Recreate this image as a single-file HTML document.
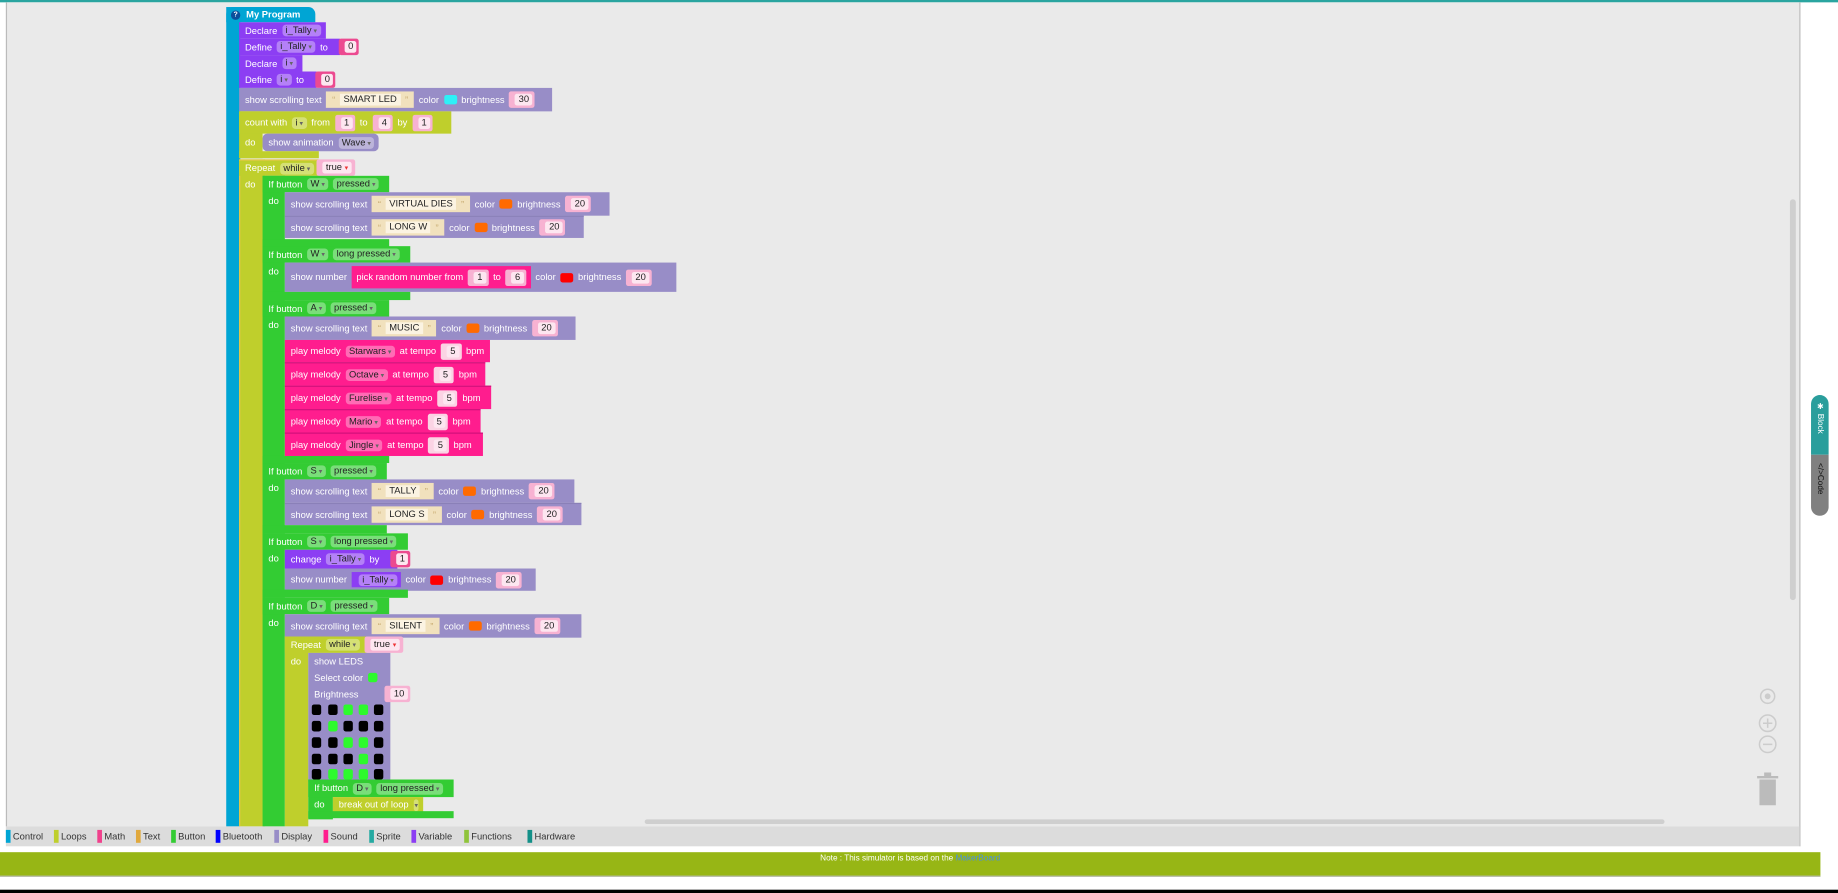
<!DOCTYPE html>
<html><head><meta charset="utf-8"><style>
html,body{margin:0;padding:0;width:1838px;height:893px;overflow:hidden;background:#fff}
#w{position:absolute;left:0;top:0;width:1568px;height:762px;transform:scale(1.17219);transform-origin:0 0;font-family:"Liberation Sans",sans-serif}
.b{position:absolute;color:#fff;font-size:8px;display:flex;align-items:center;gap:4px;padding-left:5px;box-sizing:border-box;white-space:nowrap}
.s{position:absolute}
.dd{background:rgba(255,255,255,.35);color:#222;border-radius:3px;padding:0 3px;height:10px;line-height:10px;display:inline-block}
.dd:after{content:" \25BE";font-size:6px;color:#666}
.n{background:#f7b2d2;padding:2px 2px 2px 5px;border-radius:2px;display:inline-flex}
.n i{font-style:normal;background:#fde6f0;color:#222;padding:0 3px;height:10px;line-height:10px;border-radius:2px}
.nh{background:#ec4a90}
.st{background:#f1e1bd;padding:2px 5px;display:inline-flex;gap:4px;color:#c9ad74;align-items:center}
.st i{font-style:normal;background:#fbf3e2;color:#222;padding:0 3px;height:10px;line-height:10px}
.c{display:inline-block;width:11px;height:8px;border-radius:2px}
.V{background:#8c3ef3}.D{background:#988dc7}.L{background:#bfcf2c}.G{background:#33cc33}.P{background:#ff1d8e}.C{background:#00a5d4}
.led{position:absolute;width:8px;height:9px;border-radius:2px;background:#000}
.led.g{background:#2dfa2d}
.tb{position:absolute;top:708px;font-size:8px;color:#333;display:flex;align-items:center;gap:2px}
.tb b{display:inline-block;width:4px;height:11px}
.vt{position:absolute;left:3px;writing-mode:vertical-rl;font-size:7px;line-height:9px}
</style></head><body><div id="w">
<div class="s" style="left:0;top:0;width:1568px;height:2px;background:#2aa5a0"></div>
<div class="s" style="left:5px;top:2px;width:1530px;height:703px;background:#eaeaea;border-left:1px solid #bbb"></div>
<div class="s" style="left:1527px;top:170px;width:5px;height:342px;background:#cfcfcf;border-radius:3px"></div>
<div class="s" style="left:550px;top:699px;width:870px;height:4px;background:#cfcfcf;border-radius:3px"></div>

<div class="s C" style="left:193px;top:6px;width:12px;height:699px"></div>
<div class="b C" style="left:193px;top:6px;width:76px;height:13px;border-radius:6px 6px 0 0;font-weight:bold;gap:5px;padding-left:4px"><span style="display:inline-block;width:8px;height:8px;border-radius:50%;background:#0b4f9c;font-size:6px;text-align:center;line-height:8px">?</span>My Program</div>
<div class="b V" style="left:204px;top:19px;width:74px;height:14px">Declare <span class="dd">i_Tally</span></div>
<div class="b V" style="left:204px;top:33px;width:86px;height:14px">Define <span class="dd">i_Tally</span> to</div>
<div class="b" style="left:289px;top:33px;height:14px;padding:0"><span class="n nh"><i>0</i></span></div>
<div class="b V" style="left:204px;top:47px;width:54px;height:14px">Declare <span class="dd">i</span></div>
<div class="b V" style="left:204px;top:61px;width:66px;height:14px">Define <span class="dd">i</span> to</div>
<div class="b" style="left:269px;top:61px;height:14px;padding:0"><span class="n nh"><i>0</i></span></div>
<div class="b D" style="left:204px;top:75px;width:267px;height:20px">show scrolling text <span class="st">“ <i>SMART LED</i> ”</span> color <span class="c" style="background:#2ef0f7"></span> brightness <span class="n"><i>30</i></span></div>
<div class="s L" style="left:204px;top:95px;width:20px;height:40px"></div>
<div class="b L" style="left:204px;top:95px;width:181px;height:19px">count with <span class="dd">i</span> from <span class="n"><i>1</i></span> to <span class="n"><i>4</i></span> by <span class="n"><i>1</i></span></div>
<div class="b" style="left:204px;top:114px;height:14px">do</div>
<div class="b D" style="left:224px;top:114px;width:99px;height:15px;border-radius:4px">show animation <span class="dd">Wave</span></div>
<div class="s L" style="left:204px;top:129px;width:68px;height:6px"></div>

<div class="s L" style="left:204px;top:136px;width:20px;height:569px;border-right:1px solid #e8c64a;border-left:1px solid #e8c64a"></div>
<div class="b L" style="left:204px;top:136px;width:68px;height:14px;border-top:1px solid #e8c64a">Repeat <span class="dd">while</span></div>
<div class="b" style="left:270px;top:136px;height:14px;padding:0"><span class="n" style="padding:2px 3px 2px 5px"><i>true <span style="color:#e33;font-size:6px">▾</span></i></span></div>
<div class="b" style="left:204px;top:150px;height:14px">do</div>

<div class="s G" style="left:224px;top:150px;width:19px;height:62px"></div>
<div class="b G" style="left:224px;top:150px;width:108px;height:14px">If button <span class="dd">W</span> <span class="dd">pressed</span></div>
<div class="b" style="left:224px;top:164px;height:14px">do</div>
<div class="b D" style="left:243px;top:164px;width:277px;height:20px">show scrolling text <span class="st">“ <i>VIRTUAL DIES</i> ”</span> color <span class="c" style="background:#ff6a00"></span> brightness <span class="n"><i>20</i></span></div>
<div class="b D" style="left:243px;top:184px;width:255px;height:19px;border-top:1px solid #8a80b8">show scrolling text <span class="st">“ <i>LONG W</i> ”</span> color <span class="c" style="background:#ff6a00"></span> brightness <span class="n"><i>20</i></span></div>
<div class="s G" style="left:224px;top:204px;width:108px;height:7px"></div>

<div class="s G" style="left:224px;top:210px;width:19px;height:46px"></div>
<div class="b G" style="left:224px;top:210px;width:126px;height:14px">If button <span class="dd">W</span> <span class="dd">long pressed</span></div>
<div class="b" style="left:224px;top:224px;height:14px">do</div>
<div class="b D" style="left:243px;top:224px;width:334px;height:25px">show number <span class="b P" style="position:static;height:19px;padding:0 4px">pick random number from <span class="n"><i>1</i></span> to <span class="n"><i>6</i></span></span> color <span class="c" style="background:#f00"></span> brightness <span class="n"><i>20</i></span></div>
<div class="s G" style="left:224px;top:249px;width:126px;height:7px"></div>

<div class="s G" style="left:224px;top:256px;width:19px;height:139px"></div>
<div class="b G" style="left:224px;top:256px;width:108px;height:14px">If button <span class="dd">A</span> <span class="dd">pressed</span></div>
<div class="b" style="left:224px;top:270px;height:14px">do</div>
<div class="b D" style="left:243px;top:270px;width:248px;height:20px">show scrolling text <span class="st">“ <i>MUSIC</i> ”</span> color <span class="c" style="background:#ff6a00"></span> brightness <span class="n"><i>20</i></span></div>
<div class="b P" style="left:243px;top:290px;width:175px;height:19px">play melody <span class="dd">Starwars</span> at tempo <span class="n" style="background:#fbd3e4"><i>5</i></span> bpm</div>
<div class="b P" style="left:243px;top:309px;width:171px;height:20px;border-top:1px solid #d0107a">play melody <span class="dd">Octave</span> at tempo <span class="n" style="background:#fbd3e4"><i>5</i></span> bpm</div>
<div class="b P" style="left:243px;top:329px;width:176px;height:20px;border-top:1px solid #d0107a">play melody <span class="dd">Furelise</span> at tempo <span class="n" style="background:#fbd3e4"><i>5</i></span> bpm</div>
<div class="b P" style="left:243px;top:349px;width:167px;height:20px;border-top:1px solid #d0107a">play melody <span class="dd">Mario</span> at tempo <span class="n" style="background:#fbd3e4"><i>5</i></span> bpm</div>
<div class="b P" style="left:243px;top:369px;width:169px;height:20px;border-top:1px solid #d0107a">play melody <span class="dd">Jingle</span> at tempo <span class="n" style="background:#fbd3e4"><i>5</i></span> bpm</div>
<div class="s G" style="left:224px;top:389px;width:108px;height:6px"></div>

<div class="s G" style="left:224px;top:395px;width:19px;height:60px"></div>
<div class="b G" style="left:224px;top:395px;width:106px;height:14px">If button <span class="dd">S</span> <span class="dd">pressed</span></div>
<div class="b" style="left:224px;top:409px;height:14px">do</div>
<div class="b D" style="left:243px;top:409px;width:247px;height:20px">show scrolling text <span class="st">“ <i>TALLY</i> ”</span> color <span class="c" style="background:#ff6a00"></span> brightness <span class="n"><i>20</i></span></div>
<div class="b D" style="left:243px;top:429px;width:253px;height:19px;border-top:1px solid #8a80b8">show scrolling text <span class="st">“ <i>LONG S</i> ”</span> color <span class="c" style="background:#ff6a00"></span> brightness <span class="n"><i>20</i></span></div>
<div class="s G" style="left:224px;top:448px;width:106px;height:7px"></div>

<div class="s G" style="left:224px;top:455px;width:19px;height:55px"></div>
<div class="b G" style="left:224px;top:455px;width:124px;height:14px">If button <span class="dd">S</span> <span class="dd">long pressed</span></div>
<div class="b" style="left:224px;top:469px;height:14px">do</div>
<div class="b V" style="left:243px;top:469px;width:96px;height:16px">change <span class="dd">i_Tally</span> by</div>
<div class="b" style="left:333px;top:469px;height:16px;padding:0"><span class="n nh"><i>1</i></span></div>
<div class="b D" style="left:243px;top:485px;width:214px;height:19px">show number <span class="b V" style="position:static;height:13px;padding:0 3px 0 6px"><span class="dd">i_Tally</span></span> color <span class="c" style="background:#f00"></span> brightness <span class="n"><i>20</i></span></div>
<div class="s G" style="left:224px;top:503px;width:124px;height:7px"></div>

<div class="s G" style="left:224px;top:510px;width:19px;height:195px"></div>
<div class="b G" style="left:224px;top:510px;width:108px;height:14px">If button <span class="dd">D</span> <span class="dd">pressed</span></div>
<div class="b" style="left:224px;top:524px;height:14px">do</div>
<div class="b D" style="left:243px;top:524px;width:253px;height:20px">show scrolling text <span class="st">“ <i>SILENT</i> ”</span> color <span class="c" style="background:#ff6a00"></span> brightness <span class="n"><i>20</i></span></div>
<div class="s L" style="left:243px;top:543px;width:20px;height:162px"></div>
<div class="b L" style="left:243px;top:543px;width:70px;height:14px">Repeat <span class="dd">while</span></div>
<div class="b" style="left:311px;top:543px;height:14px;padding:0"><span class="n" style="padding:2px 3px 2px 5px"><i>true <span style="color:#e33;font-size:6px">▾</span></i></span></div>
<div class="b" style="left:243px;top:557px;height:14px">do</div>
<div class="s D" style="left:263px;top:557px;width:70px;height:110px"></div>
<div class="b" style="left:263px;top:557px;height:14px">show LEDS</div>
<div class="b" style="left:263px;top:571px;height:14px">Select color <span class="c" style="background:#2dfa2d;width:8px;height:8px"></span></div>
<div class="b" style="left:263px;top:585px;height:14px">Brightness</div>
<div class="b" style="left:328px;top:584px;height:15px;padding:0"><span class="n"><i>10</i></span></div>
<div class="led" style="left:266px;top:601px"></div><div class="led" style="left:280px;top:601px"></div><div class="led g" style="left:293px;top:601px"></div><div class="led g" style="left:306px;top:601px"></div><div class="led" style="left:319px;top:601px"></div>
<div class="led" style="left:266px;top:615px"></div><div class="led g" style="left:280px;top:615px"></div><div class="led" style="left:293px;top:615px"></div><div class="led" style="left:306px;top:615px"></div><div class="led" style="left:319px;top:615px"></div>
<div class="led" style="left:266px;top:629px"></div><div class="led" style="left:280px;top:629px"></div><div class="led g" style="left:293px;top:629px"></div><div class="led g" style="left:306px;top:629px"></div><div class="led" style="left:319px;top:629px"></div>
<div class="led" style="left:266px;top:643px"></div><div class="led" style="left:280px;top:643px"></div><div class="led" style="left:293px;top:643px"></div><div class="led g" style="left:306px;top:643px"></div><div class="led" style="left:319px;top:643px"></div>
<div class="led" style="left:266px;top:656px"></div><div class="led g" style="left:280px;top:656px"></div><div class="led g" style="left:293px;top:656px"></div><div class="led g" style="left:306px;top:656px"></div><div class="led" style="left:319px;top:656px"></div>
<div class="s G" style="left:263px;top:665px;width:21px;height:34px"></div>
<div class="b G" style="left:263px;top:665px;width:124px;height:15px">If button <span class="dd">D</span> <span class="dd">long pressed</span></div>
<div class="b" style="left:263px;top:680px;height:13px">do</div>
<div class="b L" style="left:284px;top:680px;width:77px;height:13px">break out of loop <span class="dd" style="width:2px;padding:0 1px"></span></div>
<div class="s G" style="left:263px;top:692px;width:124px;height:6px"></div>

<svg class="s" style="left:1498px;top:584px" width="22" height="110" viewBox="0 0 22 110">
<g fill="none" stroke="#ccc" stroke-width="1.3"><circle cx="10" cy="10" r="6"/><circle cx="10" cy="33" r="7"/><circle cx="10" cy="51" r="7"/><path d="M10 29v8M6 33h8M6 51h8"/></g>
<circle cx="10" cy="10" r="2.5" fill="#ccc"/>
<path d="M1 78h18v2H1zM7 75h6v3H7zM3 81h14v22H3z" fill="#bbb"/>
</svg>
<div class="s" style="left:1535px;top:2px;width:1px;height:720px;background:#bbb"></div>

<div class="s" style="left:1545px;top:337px;width:15px;height:51px;background:#2a9e9c;border-radius:8px 8px 0 0;color:#fff"><span class="vt" style="top:6px">✱ Block</span></div>
<div class="s" style="left:1545px;top:388px;width:15px;height:52px;background:#808080;border-radius:0 0 8px 8px;color:#111"><span class="vt" style="top:7px">&lt;/&gt;Code</span></div>

<div class="s" style="left:5px;top:705px;width:1530px;height:17px;background:#dcdcdc"></div>
<div class="tb" style="left:5px"><b style="background:#00a5d4"></b>Control</div>
<div class="tb" style="left:46px"><b style="background:#bfcf2c"></b>Loops</div>
<div class="tb" style="left:83px"><b style="background:#f0418c"></b>Math</div>
<div class="tb" style="left:116px"><b style="background:#e0a83c"></b>Text</div>
<div class="tb" style="left:146px"><b style="background:#33cc33"></b>Button</div>
<div class="tb" style="left:184px"><b style="background:#0000ff"></b>Bluetooth</div>
<div class="tb" style="left:234px"><b style="background:#988dc7"></b>Display</div>
<div class="tb" style="left:276px"><b style="background:#ff1d8e"></b>Sound</div>
<div class="tb" style="left:315px"><b style="background:#26aaa2"></b>Sprite</div>
<div class="tb" style="left:351px"><b style="background:#8c3ef3"></b>Variable</div>
<div class="tb" style="left:396px"><b style="background:#8fc43a"></b>Functions</div>
<div class="tb" style="left:450px"><b style="background:#139088"></b>Hardware</div>

<div class="s" style="left:0;top:727px;width:1553px;height:20px;background:#97b615;border-bottom:1px solid #bbb;color:#fff;font-size:7px;text-align:center;line-height:11px">Note : This simulator is based on the <span style="color:#4a90e2">MakerBoard</span></div>
<div class="s" style="left:0;top:759px;width:1568px;height:3px;background:#000"></div>
</div></body></html>
